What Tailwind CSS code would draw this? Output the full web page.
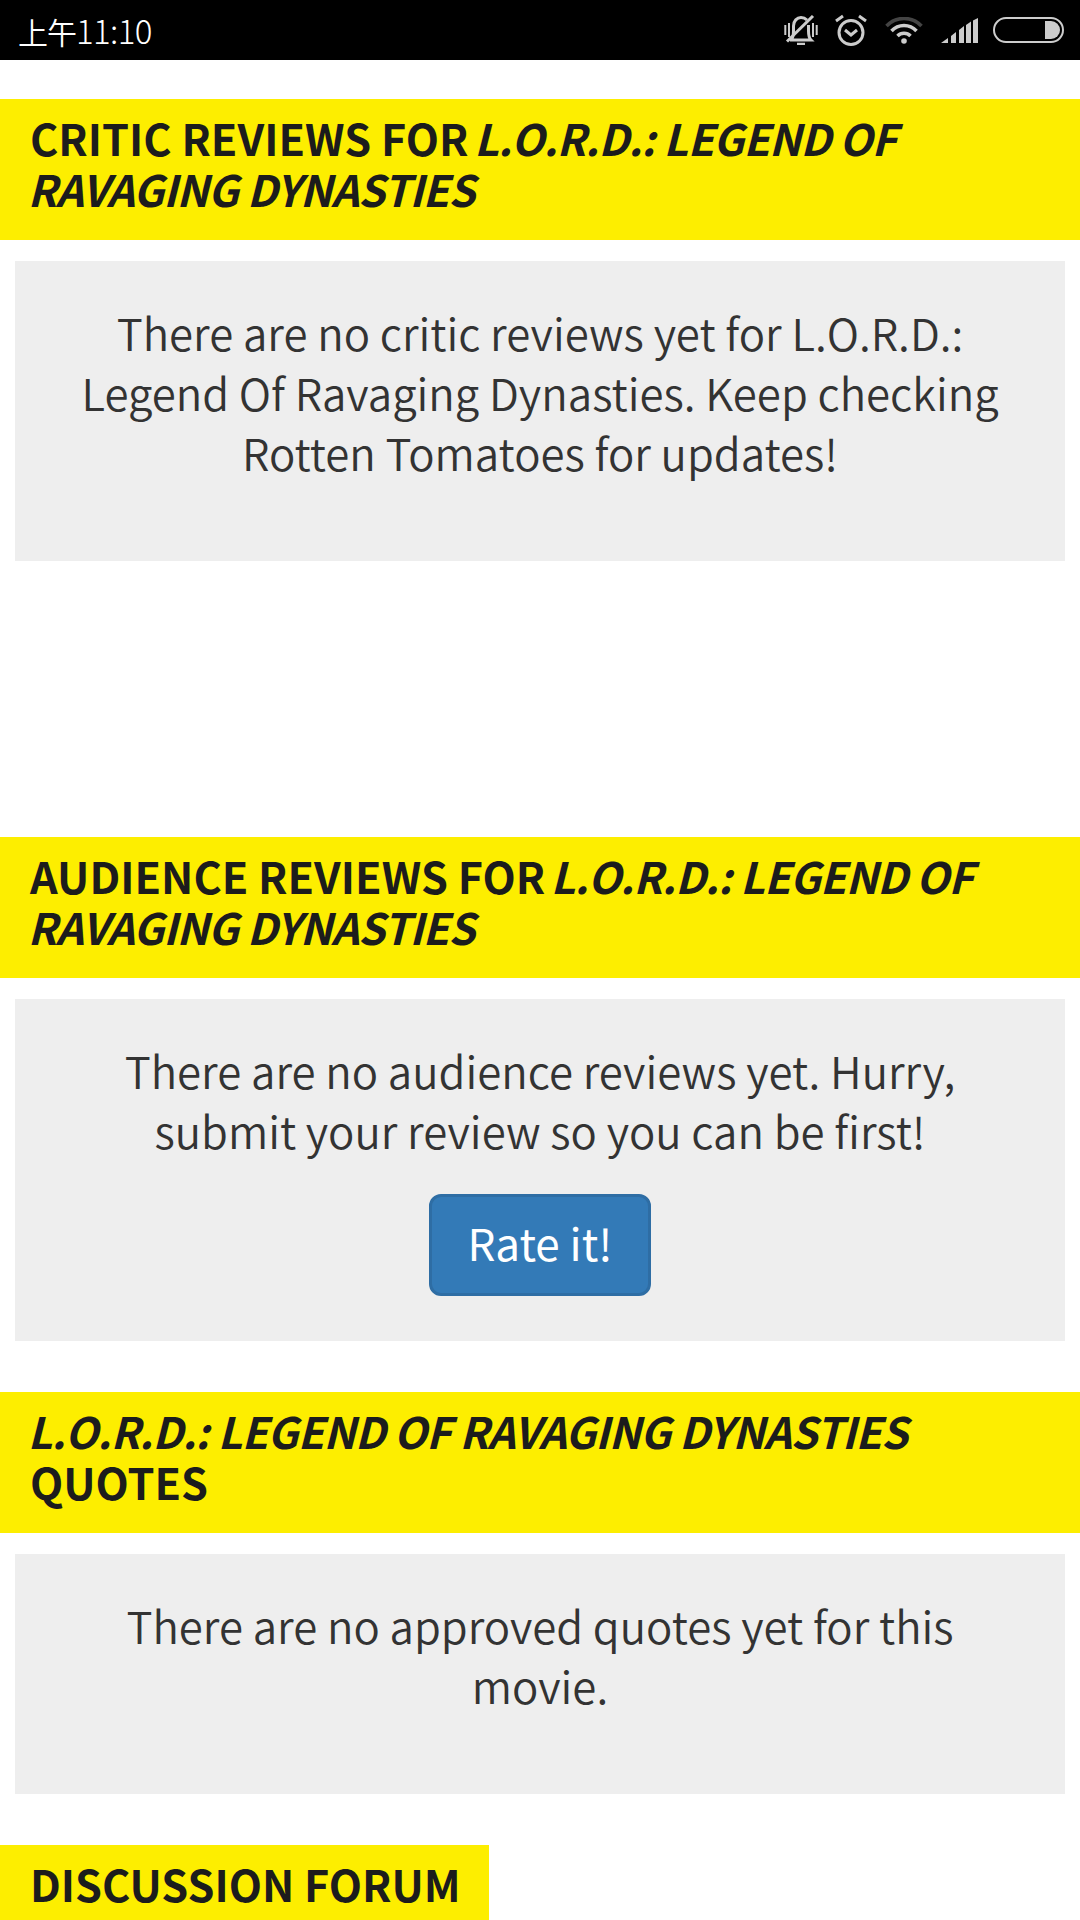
<!DOCTYPE html>
<html lang="zh-CN">
<head>
    <meta charset="UTF-8">
    <meta name="viewport" content="width=device-width, initial-scale=1.0">
    <title>L.O.R.D. reviews</title>
    <script src="https://cdn.jsdelivr.net/npm/@tailwindcss/browser@4"></script>
</head>
<body class="bg-white font-['Noto_Sans_CJK_SC','Noto_Sans',sans-serif]">
    <div class="w-[1080px] h-[1920px] overflow-hidden">
        <!-- Status bar -->
        <div class="h-[60px] bg-black flex items-center justify-between pl-[18px] pr-[16px]">
            <span class="text-white text-[33px] leading-[60px] font-light tracking-[-0.6px]"><span class="text-[30px] font-[350] tracking-[-1px]">上午</span>11:10</span>
            <div class="flex items-center">
                <svg width="34" height="30" viewBox="0 0 34 30" fill="none" stroke="#cccccc" stroke-width="3" class="mr-[17px]">
                    <path d="M7 25 C9 23 9.500 20 9.500 16 V11 C9.500 6 13 2.500 17 2.500 C19.500 2.500 21.500 3.500 23 5 M24.500 10 V16 C24.500 20 25 23 27 25 H6"/>
                    <path d="M3 26.500 L29 1"/>
                    <path d="M1.300 10 V20 M5 8 V22 M32.700 10 V20 M29 8 V22" stroke-width="2"/>
                    <path d="M13 29 h8" stroke-width="2.500"/>
                </svg>
                <svg width="32" height="32" viewBox="0 0 32 32" fill="none" stroke="#cccccc" stroke-width="3" class="mr-[18px]">
                    <circle cx="16" cy="18.500" r="12"/>
                    <path d="M10 16 L16 21 L22 16"/>
                    <path d="M1 7 L8 2 M31 7 L24 2"/>
                </svg>
                <svg width="38" height="27" viewBox="0 0 38 27" fill="none" stroke="#cccccc" stroke-width="3.5" class="mr-[18px]">
                    <path d="M1.500 9 A24 24 0 0 1 36.500 9" stroke="#444"/>
                    <path d="M6.500 14 A17 17 0 0 1 31.500 14"/>
                    <path d="M12.500 19 A9 9 0 0 1 25.500 19"/>
                    <circle cx="19" cy="24" r="2.800" fill="#cccccc" stroke="none"/>
                </svg>
                <svg width="37" height="25" viewBox="0 0 37 25" fill="#cccccc" class="mr-[15px]">
                    <path d="M0 25 L7 20 V25 Z"/>
                    <path d="M10 18 L15 14 V25 H10 Z"/>
                    <path d="M18 12 L23 8 V25 H18 Z"/>
                    <path d="M25 7 L30 3.500 V25 H25 Z"/>
                    <path d="M32 2.500 L37 0 V25 H32 Z"/>
                </svg>
                <svg width="71" height="26" viewBox="0 0 71 26" fill="none">
                    <rect x="1" y="1" width="69" height="24" rx="12" stroke="#cccccc" stroke-width="2"/>
                    <path d="M52 4 H58 a9 9 0 0 1 0 18 H52 Z" fill="#cccccc"/>
                </svg>
            </div>
        </div>

        <section class="mt-[39px]">
            <h2 class="bg-[#fdee00] text-[#1c1c1c] text-[43.2px] leading-[51px] font-bold pt-[13px] pb-[26px] pl-[27.5px] indent-[2.5px] pr-[100px]">CRITIC REVIEWS FOR <em class="tracking-[-0.9px] -ml-[4.5px]">L.O.R.D.: LEGEND OF RAVAGING DYNASTIES</em></h2>
            <div class="mt-[21px] mx-[15px] h-[300px] bg-[#eeeeee] text-[#333333] text-[43.75px] font-[350] leading-[60px] text-center pt-[41px] px-[45px]">There are no critic reviews yet for L.O.R.D.: Legend Of Ravaging Dynasties. Keep checking Rotten Tomatoes for updates!</div>
        </section>

        <section class="mt-[276px]">
            <h2 class="bg-[#fdee00] text-[#1c1c1c] text-[43.2px] leading-[51px] font-bold pt-[13px] pb-[26px] pl-[27.5px] indent-[2.5px] pr-[90px]">AUDIENCE REVIEWS FOR <em class="tracking-[-0.9px] -ml-[4.5px]">L.O.R.D.: LEGEND OF RAVAGING DYNASTIES</em></h2>
            <div class="mt-[21px] mx-[15px] h-[342px] bg-[#eeeeee] text-[#333333] text-[43.75px] font-[350] leading-[60px] text-center pt-[41px] px-[45px]">
                <p>There are no audience reviews yet. Hurry, submit your review so you can be first!</p>
                <button class="mt-[34px] w-[222px] h-[102px] pb-[6px] bg-[#337ab7] border-[3px] border-[#2e6da4] rounded-[12px] text-white text-[44px] font-normal leading-[60px]">Rate it!</button>
            </div>
        </section>

        <section class="mt-[51px]">
            <h2 class="bg-[#fdee00] text-[#1c1c1c] text-[43.2px] leading-[51px] font-bold pt-[13px] pb-[26px] pl-[30px] pr-[100px]"><em class="tracking-[-0.85px] -ml-[2.5px]">L.O.R.D.: LEGEND OF RAVAGING DYNASTIES</em> QUOTES</h2>
            <div class="mt-[21px] mx-[15px] h-[240px] bg-[#eeeeee] text-[#333333] text-[43.75px] font-[350] leading-[60px] text-center pt-[41px] px-[60px]">There are no approved quotes yet for this movie.</div>
        </section>

        <section class="mt-[51px]">
            <h2 class="inline-block w-[489px] bg-[#fdee00] text-[#1c1c1c] text-[43.2px] leading-[51px] font-bold pt-[13px] pb-[26px] pl-[30px]">DISCUSSION FORUM</h2>
        </section>
    </div>
</body>
</html>
